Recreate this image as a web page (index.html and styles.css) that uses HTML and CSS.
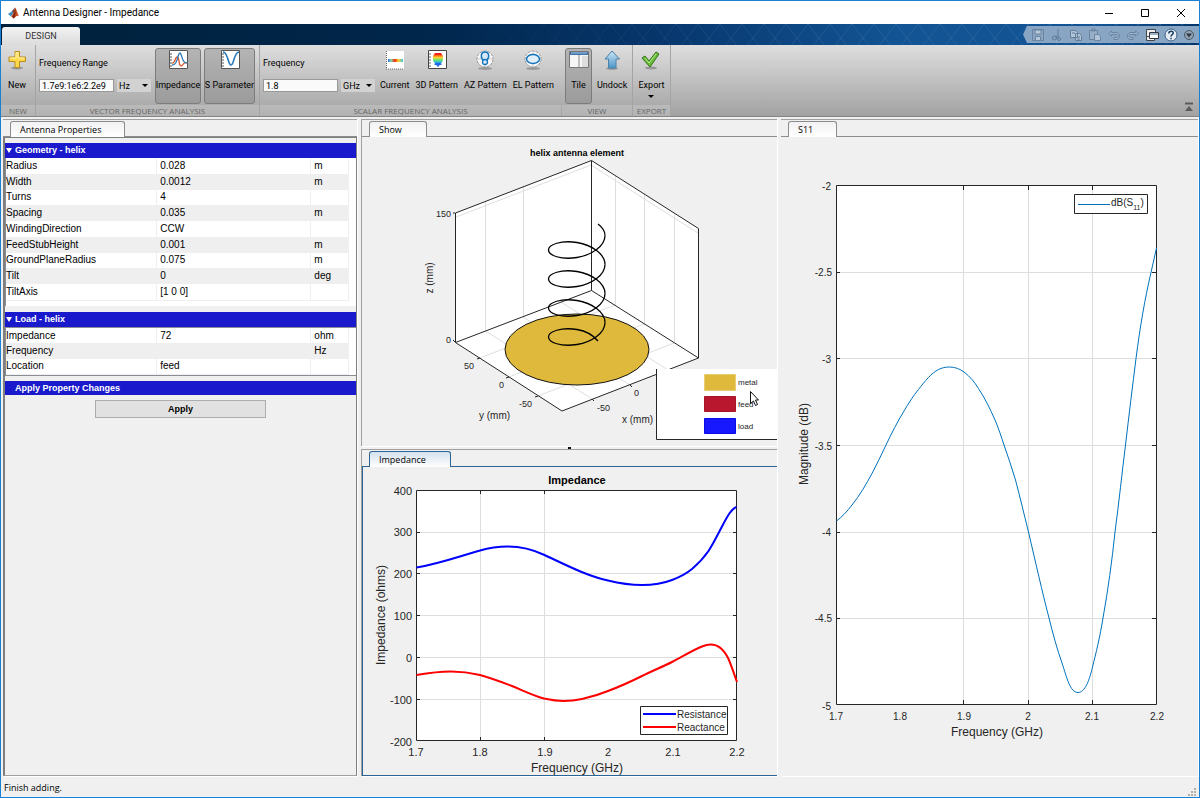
FILE: index.html
```html
<!DOCTYPE html>
<html lang="en">
<head>
<meta charset="utf-8">
<title>Antenna Designer - Impedance</title>
<link rel="stylesheet" href="styles.css">
</head>
<body>
<div class="window">
  <header class="titlebar">
    <svg class="app-icon" viewBox="0 0 14 14" aria-hidden="true"><path d="M1 8l4-2.500 2 2-3 3z" fill="#3f8fc4"/><path d="M5 5.500L8.500 1 7 7.500z" fill="#5a4a56"/><path d="M8.500 1c2 2 3 7 4.500 9.500-1.500-1-2.500-.5-3 0L7 13c-.5-1-1.500-2-3-2.500 2-1 3.500-5 4.500-9.500z" fill="#c8501e"/><path d="M8.500 1c1 3 1 6 0 10.500L7 13c-.4-.8-.8-1.300-1.300-1.700C7.500 9 8.300 5 8.500 1z" fill="#7c2414"/></svg>
    <h1 class="title">Antenna Designer - Impedance</h1>
    <div class="window-buttons">
      <button aria-label="Minimize"><svg viewBox="0 0 10 10"><path d="M1 5.500h8"/></svg></button>
      <button aria-label="Maximize"><svg viewBox="0 0 10 10"><path d="M1.500 1.500h7v7h-7z"/></svg></button>
      <button aria-label="Close"><svg viewBox="0 0 10 10"><path d="M1 1l8 8M9 1l-8 8"/></svg></button>
    </div>
  </header>

  <nav class="ribbon-tabs">
    <svg class="mesh" aria-hidden="true"><defs><pattern id="mesh" width="22" height="28" patternUnits="userSpaceOnUse"><path d="M0 0l22 28M22 0L0 28" stroke="#5b86b4" stroke-dasharray="2 1" fill="none"/></pattern></defs><rect width="100%" height="100%" fill="url(#mesh)"/></svg>
    <button class="ribbon-tab">DESIGN</button>
    <div class="quick-access">
      <button class="off" aria-label="Save"><svg viewBox="0 0 14 14"><path d="M1.500 1.500h11v11h-11z" fill="#8fa4bd" stroke="#566f8c"/><path d="M4 2h6v4H4zM4.500 8.500h5v4h-5z" fill="#d5dfea" stroke="#566f8c"/></svg></button>
      <button class="off" aria-label="Cut"><svg viewBox="0 0 14 14"><path d="M8 1v7M8 8l-3 1M8 8l1 2" stroke="#445e7b" fill="none"/><circle cx="4.500" cy="10" r="2" fill="none" stroke="#445e7b"/><circle cx="9" cy="11" r="1.500" fill="none" stroke="#445e7b"/></svg></button>
      <button class="off" aria-label="Copy"><svg viewBox="0 0 14 14"><path d="M1.500 2.500h5l2 2v5h-7zM6.500 5.500h4l2 2v5h-6z" fill="#ccd7e4" stroke="#4c6580"/><path d="M3 5h3M8 9h3M8 11h3" stroke="#4c6580"/></svg></button>
      <button class="off" aria-label="Paste"><svg viewBox="0 0 14 14"><path d="M1.500 2.500h8v9h-8zM4 1h3v2H4z" fill="#a4b5c8" stroke="#566f8c"/><path d="M6.500 6.500h4l2 2v4h-6z" fill="#ccd7e4" stroke="#566f8c"/></svg></button>
      <button class="off" aria-label="Undo"><svg viewBox="0 0 14 14"><path d="M4.500 3L1.500 5.500 4.500 8V6.500h5c2 0 2 3 0 3H7v2h3c4-1 3-7-1-7H4.500z" fill="#aabbcf" stroke="#566f8c"/></svg></button>
      <button class="off" aria-label="Redo"><svg viewBox="0 0 14 14"><path d="M9.500 3l3 2.500-3 2.500V6.500h-5c-2 0-2 3 0 3H7v2H4c-4-1-3-7 1-7h4.500z" fill="#aabbcf" stroke="#566f8c"/></svg></button>
      <button aria-label="Windows"><svg viewBox="0 0 14 14"><path d="M1.500 1.500h9v7h-9zM1.500 8.500h8v4h-8z" fill="#eee" stroke="#41464d"/><path d="M4.500 4.500h9v6h-9z" fill="#fff" stroke="#30363d"/><path d="M5 5h8v2H5z" fill="#9db5cc"/></svg></button>
      <button aria-label="Help"><svg viewBox="0 0 14 14"><circle cx="7" cy="7" r="6" fill="#e4edf5" stroke="#3f6287"/><path d="M4.800 5.500C4.800 2.500 9.500 2.500 9.200 5.200 9 6.800 7 6.600 7 8.500M7 9.800v1.500" fill="none" stroke="#1d3c5e" stroke-width="1.500"/></svg></button>
      <button aria-label="More"><svg viewBox="0 0 14 14"><circle cx="7" cy="7" r="4.500" fill="#8ea2b8" stroke="#4d5761"/><path d="M4 5.500h6L7 9.500z" fill="#30363d"/></svg></button>
    </div>
  </nav>

  <div class="toolstrip">
    <section class="group group-new">
      <div class="tools">
        <button class="tool"><svg viewBox="0 0 20 20"><ellipse cx="10" cy="18" rx="6" ry="1.500" fill="#969696"/><path d="M8 1.500h4.500v5.500h6v4.500h-6v6H8v-6H2V7h6z" fill="#ffd94a" stroke="#b88b1c"/><path d="M9 2.500h2v5.500h6.500M3 8h6V2.500" stroke="#fff3b0" fill="none"/></svg>New</button>
      </div>
      <h2>NEW</h2>
    </section>
    <section class="group group-vector">
      <div class="tools">
        <div class="fields">
          <label for="range">Frequency Range</label>
          <div class="field-row"><input id="range" type="text" value="1.7e9:1e6:2.2e9"><span class="unit"><select aria-label="Range unit"><option>Hz</option></select></span></div>
        </div>
        <button class="tool on wide-a"><svg viewBox="0 0 20 20"><path d="M1.500.5h18v18h-18z" fill="#fff" stroke="#555"/><path d="M2 4h2M2 7h2M2 10h2M2 13h2M2 16h2" stroke="#555"/><path d="M4 13c3 1 3-6 5-6 3 0 1 8 4 9 2 0 2-4 5-3" fill="none" stroke="#d9572a" stroke-width="1.300"/><path d="M4 15c4 0 4-3 5-5 1-4 2-7 3-7s2 5 3 7 1 3 4 3" fill="none" stroke="#2a78b8" stroke-width="1.300"/></svg>Impedance</button>
        <button class="tool on wide-b"><svg viewBox="0 0 20 20"><path d="M1.500.5h18v18h-18z" fill="#fff" stroke="#555"/><path d="M2 4h2M2 7h2M2 10h2M2 13h2M2 16h2" stroke="#555"/><path d="M3 2c5 0 5 13 8 13s3-13 8-13" fill="none" stroke="#2a78b8" stroke-width="1.600"/></svg>S Parameter</button>
      </div>
      <h2>VECTOR FREQUENCY ANALYSIS</h2>
    </section>
    <section class="group group-scalar">
      <div class="tools">
        <div class="fields">
          <label for="freq">Frequency</label>
          <div class="field-row"><input id="freq" type="text" value="1.8"><span class="unit"><select aria-label="Frequency unit"><option>GHz</option></select></span></div>
        </div>
        <button class="tool"><svg viewBox="0 0 20 20"><defs><linearGradient id="cur"><stop offset="0" stop-color="#2b6df0"/><stop offset=".2" stop-color="#7fe0b0"/><stop offset=".45" stop-color="#f02a12"/><stop offset=".7" stop-color="#ffd42a"/><stop offset="1" stop-color="#2fc4f0"/></linearGradient></defs><path d="M1 1h18v18H1z" fill="#fff"/><path d="M1.500 1v18M1 19h18" stroke="#666" stroke-dasharray="1 1"/><path d="M3 9h15v3H3z" fill="url(#cur)"/></svg>Current</button>
        <button class="tool"><svg viewBox="0 0 20 20"><defs><linearGradient id="pat" x2="0" y2="1"><stop offset=".1" stop-color="#f01b10"/><stop offset=".4" stop-color="#ffd22a"/><stop offset=".65" stop-color="#63e678"/><stop offset=".9" stop-color="#22a3ee"/></linearGradient></defs><path d="M1.500.5h18v18h-18z" fill="#fff" stroke="#444"/><path d="M2 4h2M2 7h2M2 10h2M2 13h2M2 16h2" stroke="#666"/><path d="M8 3h6l2 3v4l-2 4H8l-2-4V6z" fill="url(#pat)"/><path d="M9 13l-2 1.500 3 1 1 2 1-2 3-1-2-1.500z" fill="#2262e8"/></svg>3D Pattern</button>
        <button class="tool"><svg viewBox="0 0 20 20"><ellipse cx="10" cy="18.500" rx="7" ry="1.500" fill="#999"/><circle cx="10" cy="9" r="8" fill="#f6f6f6" stroke="#999" stroke-dasharray="3 1"/><path d="M10 1v16M2 9h16" stroke="#ccc"/><path d="M8 10C5 7 6 2 10 2s5 5 2 8z" fill="#d8eafa" stroke="#1474bb" stroke-width="1.500"/><circle cx="10" cy="12" r="2.500" fill="#d8eafa" stroke="#1474bb" stroke-width="1.300"/></svg>AZ Pattern</button>
        <button class="tool"><svg viewBox="0 0 20 20"><ellipse cx="10" cy="18.500" rx="7" ry="1.500" fill="#999"/><circle cx="10" cy="9" r="8" fill="#f6f6f6" stroke="#999" stroke-dasharray="3 1"/><path d="M10 1v16M2 9h16" stroke="#ccc"/><ellipse cx="10" cy="9" rx="6.500" ry="4.500" fill="#e2effa" stroke="#1474bb" stroke-width="1.500"/></svg>EL Pattern</button>
      </div>
      <h2>SCALAR FREQUENCY ANALYSIS</h2>
    </section>
    <section class="group group-view">
      <div class="tools">
        <button class="tool on tile"><svg viewBox="0 0 20 20"><path d="M.5 1.500h19v16H.5z" fill="#f6f6f6" stroke="#777"/><path d="M1 2h18v3H1z" fill="#3d72a8"/><path d="M2 3h16" stroke="#a6c6e4"/><path d="M10 5v13" stroke="#888"/><path d="M13 6h6v11h-6z" fill="#ddd"/></svg>Tile</button>
        <button class="tool"><svg viewBox="0 0 20 20"><defs><linearGradient id="up" x2="0" y2="1"><stop stop-color="#cfe7f8"/><stop offset="1" stop-color="#4a95c8"/></linearGradient></defs><ellipse cx="10" cy="18.500" rx="6" ry="1.500" fill="#999"/><path d="M10 1l7.500 8H14v9H6.500V9H3z" fill="url(#up)" stroke="#4a80a8"/></svg>Undock</button>
      </div>
      <h2>VIEW</h2>
    </section>
    <section class="group group-export">
      <div class="tools">
        <button class="tool menu"><svg viewBox="0 0 20 20"><ellipse cx="10" cy="18" rx="6" ry="1.500" fill="#969696"/><path d="M1 8l3-2 4 5L15 2l3 2L9 17z" fill="#67bd38" stroke="#35741d"/><path d="M4 8l4 5 7-9" stroke="#b4e88a" fill="none"/></svg>Export</button>
      </div>
      <h2>EXPORT</h2>
    </section>
    <button class="collapse" aria-label="Collapse toolstrip"><svg viewBox="0 0 10 10"><path d="M1 9l4-5 4 5z" fill="#5c5c5c"/><path d="M1 1.500h8" stroke="#5c5c5c" stroke-width="2"/></svg></button>
  </div>

  <main class="workspace">
    <section class="panel">
      <div class="tabstrip"><button class="tab tab-properties">Antenna Properties</button></div>
      <div class="properties">
        <h3 class="bar"><span class="fold"></span>Geometry - helix</h3>
        <div class="sheet sheet-geometry">
          <table class="geometry">
            <tr><th>Radius</th><td>0.028</td><td>m</td></tr>
            <tr><th>Width</th><td>0.0012</td><td>m</td></tr>
            <tr><th>Turns</th><td>4</td><td></td></tr>
            <tr><th>Spacing</th><td>0.035</td><td>m</td></tr>
            <tr><th>WindingDirection</th><td>CCW</td><td></td></tr>
            <tr><th>FeedStubHeight</th><td>0.001</td><td>m</td></tr>
            <tr><th>GroundPlaneRadius</th><td>0.075</td><td>m</td></tr>
            <tr><th>Tilt</th><td>0</td><td>deg</td></tr>
            <tr><th>TiltAxis</th><td>[1 0 0]</td><td></td></tr>
          </table>
        </div>
        <h3 class="bar"><span class="fold"></span>Load - helix</h3>
        <div class="sheet sheet-load">
          <table class="load">
            <tr><th>Impedance</th><td>72</td><td>ohm</td></tr>
            <tr><th>Frequency</th><td></td><td>Hz</td></tr>
            <tr><th>Location</th><td>feed</td><td></td></tr>
          </table>
        </div>
        <h3 class="bar bar-apply">Apply Property Changes</h3>
        <button class="apply">Apply</button>
      </div>
    </section>

    <div class="stack">
      <section class="panel edged">
        <div class="tabstrip"><button class="tab tab-show">Show</button></div>
        <svg class="plot" viewBox="362 137 415 309" role="img" aria-label="helix antenna element">
          <path d="M591.500 160.500L698.500 228.500V358L562 411 455.500 342.500V213z" fill="#fff"/>
          <g class="grid">
            <path d="M485.500 202v129M523.500 187v130M615.500 176v129M644.500 194v130M674.500 213v130M456 217l135-52 107 68"/>
            <path d="M485.500 331L592 399M523 317l107 68M561 302l107 68M480 358l135-53M509 377l135-53M538 396l136-53"/>
          </g>
          <g class="axis"><path d="M591.500 290.500V160.500L455.500 213V342.500L562 411 698.500 358V228.500L591.500 160.500M455.500 342.500L591.500 290.500 698.500 358"/><path d="M480 358l-3 1M509 377l-3 1M538 396l-3 1M592 399l2 2M630 385l2 2M455 342l-2-2M455 213h-2"/></g>
          <ellipse cx="577" cy="349.500" rx="72" ry="35.500" fill="#dfb93b" stroke="#111"/>
          <g fill="none" stroke="#000" stroke-width="1.300">
            <path id="turn" d="M605 235.500C605 246 592 255 577 257.500 561 260 548.500 255.500 548.500 250 548.500 244.500 561 240 577 242.500 592 245 605 254 605 264.500"/>
            <use href="#turn" y="29"/><use href="#turn" y="58"/>
            <path d="M598 224c4 3 7 7 7 11.500M605 322.500C605 333 592 342 577 344.500 561 347 548.500 342.500 548.500 337 548.500 331.500 561 327 577 329.500 586 331 593 335 598 341"/>
          </g>
          <g class="label small">
            <text x="577" y="156" text-anchor="middle" class="heading small">helix antenna element</text>
            <g text-anchor="end"><text x="451" y="217">150</text><text x="451" y="343">0</text><text x="474" y="369">50</text><text x="504" y="388">0</text><text x="532" y="407">-50</text></g>
            <text x="597" y="411">-50</text><text x="634" y="396">0</text>
          </g>
          <g class="label mid">
            <text x="479" y="419">y (mm)</text><text x="622" y="423">x (mm)</text>
            <text transform="translate(433 278) rotate(-90)" text-anchor="middle">z (mm)</text>
          </g>
          <path d="M657 369h120v70H657z" fill="#fff"/><path d="M656.500 369v70.500H777" class="axis"/>
          <path d="M704.500 374.500h31v16h-31z" fill="#dfb93b" stroke="#e9cd70"/><path d="M704.500 396.500h31v15h-31z" fill="#b9172d" stroke="#a9132a"/><path d="M704.500 418.500h31v15h-31z" fill="#1818ff" stroke="#0b0be8"/>
          <g class="label tiny"><text x="738" y="385">metal</text><text x="738" y="407">feed</text><text x="738" y="429">load</text></g>
          <path d="M750.500 391.500v12l3-2.500 2 4.500 2-1-2-4.500h3z" fill="#fff" stroke="#111"/>
        </svg>
      </section>
      <div class="splitter"></div>
      <section class="panel edged active">
        <div class="tabstrip"><button class="tab tab-impedance">Impedance</button></div>
        <svg class="plot" viewBox="363 467 414 308" role="img" aria-label="Impedance">
          <path d="M416.500 490.500h320v250h-320z" fill="#fff"/>
          <path class="grid" d="M480.500 491v249M544.500 491v249M417 532.500h319M417 573.500h319M417 615.500h319M417 657.500h319M417 699.500h319"/>
          <path class="axis" d="M416.500 490.500h320v250h-320zM480.500 491v3M544.500 491v3M480.500 740v-3M544.500 740v-3M417 532.500h3M417 573.500h3M417 615.500h3M417 657.500h3M417 699.500h3M736 532.500h-3M736 573.500h-3M736 615.500h-3M736 657.500h-3M736 699.500h-3"/>
          <path d="M416.500 567.500C440 563.500 460 556 480 550.500C490 547.500 499 546.500 508 546.500C521 546.500 533 549.500 544.500 555C566 565 586 575.500 608 580.500C620 583.500 631 585 642 585C653 585 663 583.500 672 580C680 577 686.500 573.500 692 569C698.500 563.500 704 557.500 708.500 551C713.500 543.500 717.500 535 722 526.500C727 517 731 509 736.500 507" fill="none" stroke="#00f" stroke-width="2"/>
          <path d="M416.500 675C428 673 440 671.500 451 671.500C461 671.500 471 672.800 480 675C491 678 501.500 682 512 686C523 690.500 533 695.500 544 698.500C551 700 557 701 563.500 701C570 701 576 700.300 582 699C591 697 599.500 694.500 608 691C620 686.500 631 681.500 642 676C652 671 662 667 672 662C682 657 692 650.500 702 646.500C705 645.300 708 644.500 710.500 644.500C719 644.500 725 651.500 728.500 659C732 667 734 674 737 682" fill="none" stroke="#f00" stroke-width="2"/>
          <path d="M640.500 706.500h87v28h-87z" fill="#fff" class="box"/>
          <path d="M643 714h33" stroke="#00f" stroke-width="2"/><path d="M643 727h33" stroke="#f00" stroke-width="2"/>
          <text x="577" y="484" text-anchor="middle" class="heading big">Impedance</text>
          <g class="label mid"><text x="677" y="718">Resistance</text><text x="677" y="731">Reactance</text></g>
          <g class="label tick" text-anchor="end"><text x="412" y="495">400</text><text x="412" y="536">300</text><text x="412" y="578">200</text><text x="412" y="620">100</text><text x="412" y="662">0</text><text x="412" y="704">-100</text><text x="412" y="746">-200</text></g>
          <g class="label tick" text-anchor="middle"><text x="416" y="756">1.7</text><text x="480" y="756">1.8</text><text x="545" y="756">1.9</text><text x="608" y="756">2</text><text x="673" y="756">2.1</text><text x="737" y="756">2.2</text></g>
          <g class="label title-axis" text-anchor="middle"><text x="577" y="772">Frequency (GHz)</text><text transform="translate(385 615) rotate(-90)">Impedance (ohms)</text></g>
        </svg>
      </section>
    </div>

    <section class="panel">
      <div class="tabstrip"><button class="tab tab-s11">S11</button></div>
      <svg class="plot" viewBox="781 137 417 639" role="img" aria-label="S11 magnitude">
        <path d="M836.500 185.500h320v519h-320z" fill="#fff"/>
        <path class="grid" d="M963.500 186v518M1028.500 186v518M1092.500 186v518M837 272.500h319M837 358.500h319M837 445.500h319M837 532.500h319M837 618.500h319"/>
        <path class="axis" d="M836.500 185.500h320v519h-320zM963.500 186v4M1028.500 186v4M1092.500 186v4M963.500 704v-4M1028.500 704v-4M1092.500 704v-4M837 272.500h3M837 358.500h3M837 445.500h3M837 532.500h3M837 618.500h3M1156 272.500h-4M1156 358.500h-4M1156 445.500h-4M1156 532.500h-4M1156 618.500h-4"/>
        <path d="M836.500 521C842 517 847 511.500 852 505C860 495 866 484.500 872 473.500C877 464 881.500 454.500 886 445C891.500 433.500 897.500 421.500 904 411C908.500 403.500 913 396 918.500 389.500C925 381 931.500 373 938.500 369.500C942 367.800 945.500 367 949.500 367C955 367 960 369 964 372C970 376.500 974.500 382 978.500 388.500C985 398.500 990 408.500 995 420C998.500 428 1001 436 1004 445C1008 456.500 1012 468 1015.500 480C1020 497 1024 514 1028.500 532C1036 564 1042 591 1049 618C1053 634 1057 649 1062 663C1067 678 1070 692.500 1078 692.500C1085 692.500 1089.500 680 1092.500 667C1096 653 1100 637 1103 618C1108 590 1112 561 1115 532C1119 502 1122 473 1125.500 445C1129 415 1132.500 386 1136 358.500C1140 327 1145 298 1151 272.500L1156.500 248" fill="none" stroke="#0072bd"/>
        <path d="M1074.500 194.500h73v19h-73z" class="box" fill="#fff"/><path d="M1078 204.500h32" stroke="#0072bd"/>
        <text x="1111" y="206" class="label mid">dB(S<tspan class="sub" dy="4">11</tspan><tspan dy="-4">)</tspan></text>
        <g class="label mid" text-anchor="end"><text x="831" y="190">-2</text><text x="832" y="276">-2.5</text><text x="831" y="363">-3</text><text x="832" y="450">-3.5</text><text x="831" y="536">-4</text><text x="832" y="622">-4.5</text><text x="831" y="710">-5</text></g>
        <g class="label mid" text-anchor="middle"><text x="836" y="720">1.7</text><text x="900" y="720">1.8</text><text x="964" y="720">1.9</text><text x="1028" y="720">2</text><text x="1092" y="720">2.1</text><text x="1157" y="720">2.2</text></g>
        <g class="label title-axis" text-anchor="middle"><text x="997" y="736">Frequency (GHz)</text><text transform="translate(808 444) rotate(-90)">Magnitude (dB)</text></g>
      </svg>
    </section>
  </main>

  <footer class="status"><span>Finish adding.</span><svg class="grip" viewBox="0 0 9 9" aria-hidden="true"><path d="M6 1h2M3 4h2M6 4h2M0 7h2M3 7h2M6 7h2" stroke="#b5b0a5" stroke-width="2"/></svg></footer>
</div>
</body>
</html>
```
FILE: styles.css
```css
* { box-sizing: border-box; }
body { margin: 0; background: #f0f0f0; color: #000; font-family: "Open Sans", "Noto Sans", sans-serif; font-size: 9px; }
button, input, select { font: inherit; color: inherit; margin: 0; padding: 0; border: 0; background: none; }
h1, h2, h3 { margin: 0; font-weight: 400; }
svg { display: block; }

.window { display: flex; flex-direction: column; min-height: 100vh; border: 1px solid #1a80d4; background: #f0f0f0; }

.titlebar { display: flex; align-items: center; height: 23px; padding-left: 6px; background: #fff; }
.app-icon { width: 13px; height: 14px; }
.title { flex: 1; margin-left: 3px; font-family: Roboto, sans-serif; font-size: 10px; line-height: 16px; }
.window-buttons { display: flex; }
.window-buttons button { display: grid; place-items: center; width: 36px; height: 22px; }
.window-buttons svg { width: 10px; height: 10px; fill: none; stroke: #000; }

.ribbon-tabs { position: relative; display: flex; align-items: flex-end; justify-content: space-between; height: 21px; padding-left: 1px; background: linear-gradient(90deg, #00213b 0%, #00264b 35%, #07366c 55%, #125494 75%, #135393 92%, #05366b 100%); }
.mesh { position: absolute; inset: 0 0 0 auto; width: 62%; height: 100%; opacity: .4; -webkit-mask-image: linear-gradient(90deg, transparent, #000 50%); mask-image: linear-gradient(90deg, transparent, #000 50%); }
.ribbon-tab { width: 78px; height: 18px; border-radius: 3px 3px 0 0; background: linear-gradient(#f2f2f2, #dcdcdc); color: #333; font-family: Roboto, sans-serif; line-height: 18px; }
.quick-access { position: relative; display: flex; align-items: center; justify-content: space-around; align-self: center; width: 176px; height: 17px; padding-left: 6px; background: #88a5c4; clip-path: polygon(4px 0, 100% 0, 100% 100%, 4px 100%, 0 50%); }
.quick-access svg { width: 14px; height: 14px; }
.quick-access .off { opacity: .6; }

.toolstrip { display: flex; height: 72px; background: linear-gradient(#dedede, #a2a2a2); border-bottom: 1px solid #858585; font-family: Roboto, sans-serif; }
.group { display: flex; flex-direction: column; border-right: 1px solid #a4a4a4; }
.group-new { width: 35px; }
.group-vector { width: 224px; }
.group-scalar { width: 302px; border-right-color: transparent; }
.group-view { width: 71px; }
.group-export { width: 38px; }
.group h2 { height: 11px; background: rgba(255, 255, 255, .18); color: #666; font-family: "Open Sans", "Noto Sans", sans-serif; font-size: 8px; line-height: 12px; text-align: center; }
.tools { display: flex; flex: 1; padding: 3px 3px 1px; }
.group-new .tools, .group-export .tools { justify-content: center; }
.group-new .tools { padding-left: 1px; }
.tool { display: flex; flex-direction: column; align-items: center; height: 56px; padding-top: 2px; gap: 9px; line-height: 12px; white-space: nowrap; }
.tool svg { width: 20px; height: 20px; }
.on { padding-top: 1px; border: 1px solid #7c7c7c; border-radius: 3px; background: linear-gradient(#b4b4b4, #9b9b9b); }
.wide-a { width: 46px; margin-left: 4px; }
.wide-b { width: 51px; margin-left: 3px; }
.tile { width: 27px; }
.group-view .tools { gap: 5px; }
.group-scalar .tools { gap: 6px; }
.group-scalar .fields { margin-right: -1px; }
.menu::after { content: ""; margin-top: -5px; border: 3px solid transparent; border-top-color: #000; border-bottom: 0; }
.fields { display: flex; flex-direction: column; gap: 10px; padding-top: 9px; }
.fields label { line-height: 12px; }
.field-row { display: flex; gap: 3px; }
.field-row input { width: 75px; height: 13px; padding: 0 2px; background: #fafafa; border: 1px solid #999; }
.unit { position: relative; display: flex; }
.unit select { width: 34px; height: 13px; padding-left: 2px; appearance: none; background: #d2d2d2; }
.unit::after { content: ""; position: absolute; right: 3px; top: 5px; border: 3px solid transparent; border-top-color: #000; border-bottom: 0; pointer-events: none; }
.collapse { align-self: flex-end; margin: 0 5px 4px auto; }
.collapse svg { width: 10px; height: 10px; }

.workspace { display: grid; flex: 1; grid-template-columns: 354fr 416fr 417fr; gap: 4px; padding: 2px 1px 0 2px; }
.panel { display: flex; flex: 1; flex-direction: column; min-width: 0; min-height: 0; box-shadow: 1px 1px #fff; }
.edged { border-left: 1px solid #a0a0a0; }
.tabstrip { display: flex; align-items: flex-end; height: 18px; padding-left: 7px; border-top: 1px solid #a0a0a0; border-bottom: 1px solid #8c8c8c; }
.tab { height: 16px; margin-bottom: -1px; padding-left: 9px; border: 1px solid #8c8c8c; border-bottom: 0; border-radius: 3px 3px 0 0; background: linear-gradient(#f2f2f4, #fff); line-height: 13px; text-align: left; }
.tab-properties { width: 115px; }
.tab-show { width: 58px; }
.tab-impedance { width: 82px; }
.tab-s11 { width: 49px; }
.active .tabstrip { border-bottom-color: #2c6496; }
.active .tab { border-color: #2c6496; background: linear-gradient(#d4e1ed, #fff); }
.active .plot { border-left: 1px solid #2c6496; border-bottom: 1px solid #2c6496; }
.stack { display: flex; flex-direction: column; min-width: 0; }
.splitter { height: 3px; background: linear-gradient(#111, #111) center 1px / 3px 2px no-repeat; }
.plot { flex: 1; width: 100%; min-height: 0; }

.properties { flex: 1; padding-top: 5px; border: 1px solid #7f7f7f; border-left-width: 2px; border-bottom-color: #a0a0a0; font-family: "Liberation Sans", Arial, sans-serif; }
.bar { display: flex; align-items: center; gap: 3px; height: 15px; padding-left: 1px; background: #1a1acc; color: #fff; font-size: 9px; font-weight: 700; line-height: 15px; }
.fold { border: 3px solid transparent; border-top: 5px solid #fff; border-bottom: 0; }
.bar-apply { margin-top: 5px; padding-left: 10px; height: 14px; }
.sheet { background: #fff; border-left: 1px solid #8c8c94; }
.sheet-geometry { padding-bottom: 5px; margin-bottom: 6px; }
.sheet-load { border-top: 1px solid #8c8c94; border-bottom: 1px solid #8c8c94; }
table { width: 98%; border-collapse: collapse; table-layout: fixed; font-size: 10px; line-height: 12px; border-bottom: 1px solid #efefef; }
.geometry { height: 143px; }
.load { height: 47px; }
th, td { padding: 0 0 0 3px; border-right: 1px solid #efefef; font-weight: 400; text-align: left; }
th { width: 44%; padding-left: 0; }
td:last-child { width: 11%; }
tr:nth-child(even) { background: #efefef; }
.apply { display: block; width: 171px; height: 18px; margin: 5px auto; border: 1px solid #adadad; background: #e1e1e1; font-weight: 700; }

.plot text { font-family: "Liberation Sans", Arial, sans-serif; }
.label { fill: #262626; }
.heading { fill: #000; font-weight: 700; }
.tiny { font-size: 8px; }
.small { font-size: 9px; }
.mid { font-size: 10px; }
.tick { font-size: 11px; }
.big { font-size: 11px; }
.title-axis { font-size: 12px; }
.sub { font-size: 7px; }
.grid { fill: none; stroke: #dedede; }
.axis { fill: none; stroke: #262626; }
.box { stroke: #262626; }

.status { display: flex; align-items: center; justify-content: space-between; height: 21px; padding: 3px 2px 0 3px; line-height: 14px; }
.grip { width: 9px; height: 9px; align-self: flex-end; }
```
